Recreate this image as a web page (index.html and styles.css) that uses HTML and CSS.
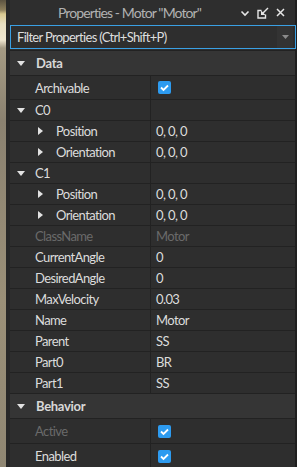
FILE: index.html
```html
<!DOCTYPE html>
<html>
<head>
<meta charset="utf-8">
<link rel="stylesheet" href="styles.css">
</head>
<body>
<div class="scene"></div>
<div class="panel">
  <div class="titlebar">
    <span class="title">Properties - Motor "Motor"</span>
    <div class="tools">
      <svg class="ico" width="10" height="8" viewBox="0 0 10 8"><path d="M1.5 2.5 L5 6 L8.5 2.5" fill="none" stroke="#e6e6e6" stroke-width="1.6"/></svg>
      <svg class="ico" width="12" height="12" viewBox="0 0 12 12"><path d="M4.5 3.5 H1 V11 H8.5 V7.5" fill="none" stroke="#e6e6e6" stroke-width="1.4"/><path d="M11 1 L5.5 6.5" stroke="#e6e6e6" stroke-width="1.5"/><path d="M4 3.5 V8 H8.5 Z" fill="#e6e6e6"/></svg>
      <svg class="ico" width="9" height="9" viewBox="0 0 9 9"><path d="M1 1 L8 8 M8 1 L1 8" stroke="#e6e6e6" stroke-width="1.5"/></svg>
    </div>
  </div>
  <div class="filter">
    <span class="filter-text">Filter Properties (Ctrl+Shift+P)</span>
    <span class="filter-drop"><svg width="7" height="4" viewBox="0 0 7 4"><path d="M0 0 H7 L3.5 4 Z" fill="#8a8a8a"/></svg></span>
  </div>
  <div class="list">
    <div class="row head"><span class="arrow down"></span><span class="label">Data</span></div>
    <div class="row check tall-a"><span class="name">Archivable</span><span class="val"><span class="cb"></span></span></div>
    <div class="row"><span class="name"><span class="arrow down"></span>C0</span><span class="val"></span></div>
    <div class="row"><span class="name sub"><span class="arrow right"></span>Position</span><span class="val">0, 0, 0</span></div>
    <div class="row"><span class="name sub"><span class="arrow right"></span>Orientation</span><span class="val">0, 0, 0</span></div>
    <div class="row"><span class="name"><span class="arrow down"></span>C1</span><span class="val"></span></div>
    <div class="row"><span class="name sub"><span class="arrow right"></span>Position</span><span class="val">0, 0, 0</span></div>
    <div class="row"><span class="name sub"><span class="arrow right"></span>Orientation</span><span class="val">0, 0, 0</span></div>
    <div class="row dim"><span class="name">ClassName</span><span class="val">Motor</span></div>
    <div class="row"><span class="name">CurrentAngle</span><span class="val">0</span></div>
    <div class="row"><span class="name">DesiredAngle</span><span class="val">0</span></div>
    <div class="row"><span class="name">MaxVelocity</span><span class="val">0.03</span></div>
    <div class="row"><span class="name">Name</span><span class="val">Motor</span></div>
    <div class="row"><span class="name">Parent</span><span class="val">SS</span></div>
    <div class="row"><span class="name">Part0</span><span class="val">BR</span></div>
    <div class="row"><span class="name">Part1</span><span class="val">SS</span></div>
    <div class="row head"><span class="arrow down"></span><span class="label">Behavior</span></div>
    <div class="row check dim"><span class="name">Active</span><span class="val"><span class="cb"></span></span></div>
    <div class="row check"><span class="name">Enabled</span><span class="val"><span class="cb"></span></span></div>
  </div>
</div>
</body>
</html>
```
FILE: styles.css
```css
html, body {
  margin: 0;
  height: 100%;
  overflow: hidden;
  background: #2b2b2b;
}
body {
  display: flex;
  font-family: "Lato", "Liberation Sans", sans-serif;
  font-size: 13px;
  letter-spacing: -0.6px;
  color: #dcdcdc;
}
.scene {
  width: 6px;
  flex: none;
  background: linear-gradient(to bottom, #5b5240 0px, #8d7f5c 10px, #d8c890 14px, #e8dfc0 24px, #efe6cf 40px, #a59b84 48px, #8a8170 120px, #9b9078 300px, #8f8672 467px);
}
.panel {
  flex: 1;
  display: flex;
  flex-direction: column;
  border-left: 4px solid #272727;
  border-right: 2px solid #1f1f1f;
  background: #2e2e2e;
  min-width: 0;
}
.titlebar {
  height: 25px;
  display: flex;
  align-items: center;
  background: #2e2e2e;
  flex: none;
}
.title {
  color: #b2b2b2;
  font-size: 14px;
  letter-spacing: -0.9px;
  padding-left: 48px;
  flex: 1;
  white-space: nowrap;
}
.tools {
  display: flex;
  align-items: center;
  gap: 7px;
  padding-right: 10px;
}
.ico { display: block; }
.filter {
  height: 22px;
  border: 1px solid #3aa0e4;
  display: flex;
  align-items: center;
  margin-right: -1px;
  flex: none;
}
.filter-text {
  flex: 1;
  padding-left: 6px;
  color: #dedede;
  font-size: 13px;
  letter-spacing: -0.7px;
}
.filter-drop {
  width: 16px;
  height: 22px;
  background: #333;
  display: flex;
  align-items: center;
  justify-content: center;
  margin-right: 2px;
}
.filter-drop svg { display: block; }
.list {
  margin-top: 1px;
  border-top: 1px solid #222;
  flex: 1;
}
.row {
  display: grid;
  grid-template-columns: 141px 1fr;
  height: 20px;
  border-bottom: 1px solid #222;
  align-items: stretch;
}
.row.head {
  display: flex;
  align-items: center;
  height: 24px;
  background: #353535;
  font-weight: bold;
  color: #d8d8d8;
  letter-spacing: -0.3px;
}
.row.check { height: 24px; }
.row.tall-a { height: 23px; }
.name, .val {
  display: flex;
  align-items: center;
  white-space: nowrap;
}
.name {
  padding-left: 25px;
  border-right: 1px solid #222;
  position: relative;
}
.val { padding-left: 5px; }
.dim { color: #6a6a6a; }
.head .arrow { margin-left: 7px; margin-right: 11px; }
.arrow { display: inline-block; flex: none; }
.arrow.down {
  width: 0; height: 0;
  border-left: 4px solid transparent;
  border-right: 4px solid transparent;
  border-top: 5px solid #e2e2e2;
}
.name > .arrow.down {
  position: absolute;
  left: 7px;
  top: 8px;
}
.arrow.right {
  width: 0; height: 0;
  border-top: 4px solid transparent;
  border-bottom: 4px solid transparent;
  border-left: 5px solid #e2e2e2;
  position: absolute;
  left: 28px;
  top: 6px;
}
.name.sub { padding-left: 46px; }
.cb {
  width: 13px;
  height: 13px;
  border-radius: 2px;
  background: #2d9bf0 url("data:image/svg+xml;utf8,<svg xmlns='http://www.w3.org/2000/svg' width='13' height='13' viewBox='0 0 13 13'><path d='M3 6.5 L5.5 9 L10 4.5' fill='none' stroke='white' stroke-width='1.8'/></svg>") center/13px 13px no-repeat;
  margin-left: 2px;
}
```
